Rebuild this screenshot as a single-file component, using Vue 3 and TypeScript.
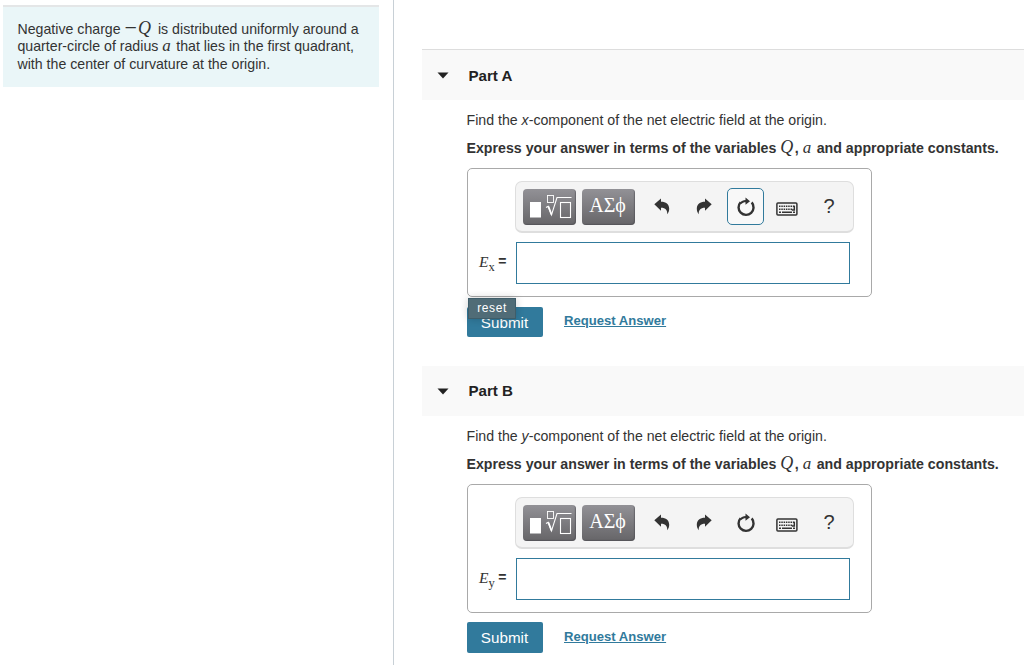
<script setup lang="ts">
import { ref } from 'vue';

interface Part {
  id: string;
  title: string;
  axis: string;
}

const parts: Part[] = [
  { id: 'a', title: 'Part A', axis: 'x' },
  { id: 'b', title: 'Part B', axis: 'y' },
];

const answers = ref<Record<string, string>>({ a: '', b: '' });
const activeReset = ref('a');

function resetAnswer(id: string) {
  answers.value[id] = '';
  activeReset.value = id;
}
</script>

<template>
  <div class="page">
    <aside class="sidebar">
      <div class="prompt">
        <div>Negative charge <span class="math minus">−</span><span class="math big-q">Q</span> is distributed uniformly around a</div>
        <div>quarter-circle of radius <span class="math var-a">a</span> that lies in the first quadrant,</div>
        <div>with the center of curvature at the origin.</div>
      </div>
    </aside>

    <main class="content">
      <section v-for="part in parts" :key="part.id" class="part">
        <header class="part-header">
          <svg class="caret" width="12" height="7" viewBox="0 0 12 7">
            <path d="M0.5 0.5h11L6 6.6z" fill="#222" />
          </svg>
          <h2>{{ part.title }}</h2>
        </header>

        <div class="part-body">
          <p class="question">Find the <i>{{ part.axis }}</i>-component of the net electric field at the origin.</p>
          <p class="instructions">Express your answer in terms of the variables <span class="math var-q">Q</span>, <span class="math var-a">a</span> and appropriate constants.</p>

          <div class="answer-box">
            <div class="toolbar">
              <button class="palette" aria-label="Templates">
                <svg width="53" height="36" viewBox="0 0 53 36" fill="none" stroke="#fff">
                  <rect x="7" y="13" width="11" height="15.5" fill="#fff" stroke="none" />
                  <rect x="24.5" y="6.5" width="6" height="7" stroke-width="0.9" />
                  <path d="M23 18.5l2.2-1.200 3.300 8.600L34 8.500h14.500" stroke-width="1.100" />
                  <path d="M25.400 17.500l3.100 8" stroke-width="1.800" />
                  <rect x="37.500" y="13.500" width="10" height="15" stroke-width="1.100" />
                </svg>
              </button>
              <button class="palette greek">ΑΣϕ</button>
              <button class="tool undo" aria-label="undo">
                <svg width="16" height="17" viewBox="0 0 16 17">
                  <path d="M0.300 6.300L7 .4v3.300c5 0 8.200 2.500 8.200 7 0 2.300-.7 4-2 5.600.3-4-1.600-6.500-6.200-6.500v3z" fill="#333" />
                </svg>
              </button>
              <button class="tool redo" aria-label="redo">
                <svg width="16" height="17" viewBox="0 0 16 17">
                  <path d="M15.700 6.300L9 .4v3.300c-5 0-8.200 2.500-8.200 7 0 2.300.7 4 2 5.600-.3-4 1.600-6.500 6.200-6.500v3z" fill="#333" />
                </svg>
              </button>
              <button class="tool reset" :class="{ active: activeReset === part.id }" aria-label="reset" @click="resetAnswer(part.id)">
                <svg width="20" height="21" viewBox="0 0 20 21">
                  <path d="M4.600 6.200A7.500 7.500 0 1 0 15.700 6.400" fill="none" stroke="#333" stroke-width="2.400" />
                  <path d="M3.800 6.700C5.600 5 7.300 4.100 9.500 4.100V1.500L14 5.200 9.500 8.800V6.300C7.600 6.300 6.600 6.800 5.400 8z" fill="#333" />
                </svg>
              </button>
              <button class="tool keyboard" aria-label="keyboard shortcuts">
                <svg width="22" height="14" viewBox="0 0 22 14" fill="none" stroke="#333">
                  <rect x="0.900" y="1.100" width="20" height="11.800" rx="1" stroke-width="1.500" />
                  <path d="M3 4.300h16" stroke-width="1.500" stroke-dasharray="1.500 0.800" />
                  <path d="M3 7.300h14" stroke-width="1.500" stroke-dasharray="1.500 0.800" />
                  <path d="M18.300 3.700v4.300h-2.500M3 10.200h2M6 10.200h10M17 10.200h2" stroke-width="1.500" />
                </svg>
              </button>
              <button class="tool help" aria-label="help">?</button>
            </div>
            <div class="answer-row">
              <label class="lhs" :for="`answer-${part.id}`"><i>E</i><span class="sub">{{ part.axis }}</span><span class="eq">=</span></label>
              <input :id="`answer-${part.id}`" v-model="answers[part.id]" class="answer-input" type="text" autocomplete="off">
            </div>
          </div>

          <div class="actions">
            <button class="submit">Submit</button>
            <a class="request">Request Answer</a>
            <span v-if="activeReset === part.id" class="tooltip">reset</span>
          </div>
        </div>
      </section>
    </main>
  </div>
</template>

<style>
body {
  margin: 0;
  overflow: hidden;
  background: #fff;
}
</style>

<style scoped>
.page {
  display: flex;
  width: 1024px;
  height: 665px;
  overflow: hidden;
  font-family: "Liberation Sans", Arial, sans-serif;
  font-size: 14.17px;
  line-height: 17.5px;
  color: #333;
}

.page * {
  box-sizing: border-box;
}

button {
  margin: 0;
  padding: 0;
  border: none;
  background: none;
  font-family: inherit;
  color: inherit;
  cursor: pointer;
}

svg {
  display: block;
}

.sidebar {
  flex: 0 0 394px;
  padding: 5px 14px 0 3px;
  border-right: 1px solid #c8d0d6;
}

.prompt {
  height: 82px;
  padding: 13.5px 0 0 14.5px;
  border-top: 2px solid #e4e6e7;
  background: #eaf6f8;
  white-space: nowrap;
}

.math {
  display: inline-block;
  font-family: "Liberation Serif", serif;
  font-size: 17px;
  font-style: italic;
  font-weight: 400;
  line-height: 0;
}

.minus {
  width: 13.5px;
  font-size: 22px;
  font-style: normal;
  vertical-align: -1px;
}

.big-q {
  width: 16px;
  font-size: 18px;
}

.var-q {
  width: 14.5px;
  font-size: 18px;
}

.var-a {
  width: 10px;
}

.content {
  flex: 1;
  padding: 49px 0 0 28px;
  min-width: 0;
}

.part {
  height: 316px;
}

.part-header {
  display: flex;
  align-items: center;
  height: 51px;
  padding: 1px 0 0 15px;
  background: #f9f9f9;
  border-top: 1px solid #ddd;
}

.part + .part .part-header {
  height: 50px;
  margin-top: 1px;
  padding-top: 0;
  border-top: none;
}

.part-header h2 {
  margin: 0 0 0 19.5px;
  font-size: 15.1px;
  font-weight: 700;
  color: #222;
}

.part-body {
  padding: 11px 0 0 44.5px;
}

.question,
.instructions {
  margin: 0;
  height: 18px;
  line-height: 18px;
  white-space: nowrap;
}

.instructions {
  margin-top: 10px;
  font-size: 14.2px;
  font-weight: 700;
}

.answer-box {
  width: 405px;
  height: 129px;
  margin-top: 11px;
  margin-left: 0.5px;
  padding: 12px 0 0;
  border: 1px solid #a9a9a9;
  border-radius: 5px;
}

.toolbar {
  display: flex;
  align-items: center;
  width: 339px;
  height: 52px;
  margin-left: 47px;
  padding-left: 7px;
  border: 1px solid #dedede;
  border-bottom-width: 2px;
  border-radius: 7px;
  background: #f4f4f4;
}

.palette {
  flex: none;
  width: 53px;
  height: 36px;
  margin-right: 6px;
  border-radius: 4px;
  background: linear-gradient(#929196, #666568);
  box-shadow: inset -1px -1px 1px rgba(70, 70, 75, 0.5);
}

.greek {
  padding: 0 2px 2px 0;
  margin-right: 0;
  font-family: "Liberation Serif", serif;
  font-size: 20px;
  color: #fff;
}

.tool {
  display: flex;
  flex: none;
  align-items: center;
  justify-content: center;
  width: 36px;
  height: 37px;
}

.undo {
  margin-left: 9px;
}

.redo {
  margin-left: 6px;
}

.reset {
  margin-left: 5px;
  width: 37px;
  border: 1px solid transparent;
  border-radius: 5px;
}

.reset.active {
  border-color: #317a9c;
  background: #f8f8f8;
}

.keyboard {
  margin-left: 5px;
  padding-top: 4px;
}

.help {
  margin-left: 6px;
  font-size: 20px;
}

.answer-row {
  display: flex;
  margin-top: 9px;
}

.lhs {
  display: flex;
  width: 48px;
  padding: 11px 0 0 11px;
  font-family: "Liberation Serif", serif;
  font-size: 15.5px;
}

.sub {
  padding-top: 6px;
  font-size: 12.5px;
}

.eq {
  margin-left: 3.5px;
  font-family: "Liberation Sans", Arial, sans-serif;
  font-size: 14px;
  font-weight: 700;
}

.answer-input {
  width: 334px;
  height: 42px;
  padding: 0 8px;
  border: 1px solid #317a9c;
  border-radius: 0;
  outline: none;
  background: #fff;
  font-size: 16px;
}

.actions {
  position: relative;
  display: flex;
  margin-top: 10px;
}

.submit {
  width: 76px;
  height: 30px;
  border-radius: 2px;
  background: #317a9c;
  font-size: 15.2px;
  color: #fff;
}

.part + .part .submit {
  height: 31px;
  margin-top: -1px;
}

.request {
  margin-left: 21.5px;
  padding-top: 5px;
  font-size: 13.1px;
  font-weight: 700;
  color: #317a9c;
  text-decoration: underline;
}

.tooltip {
  position: absolute;
  top: -9px;
  left: 1.5px;
  width: 48px;
  height: 21px;
  border: 1px solid #3f5d69;
  background: #506c77;
  box-shadow: 0 0 8px rgba(0, 0, 0, 0.2);
  font-size: 12px;
  line-height: 19px;
  letter-spacing: 0.6px;
  text-align: center;
  color: #fff;
}
</style>
